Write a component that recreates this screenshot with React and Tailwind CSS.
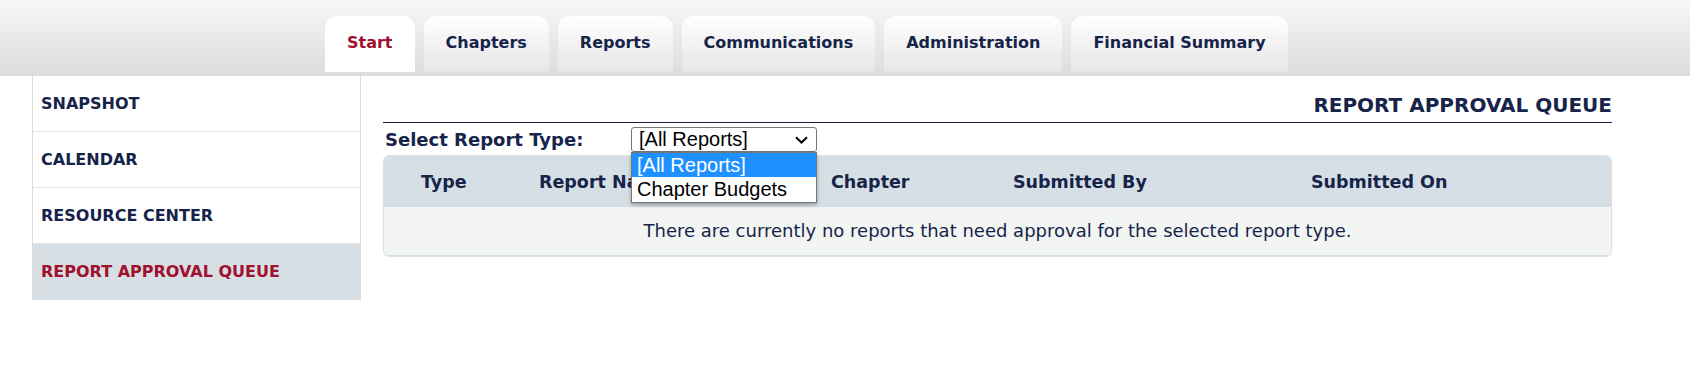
import React from "react";

const NAVY = "text-[#16244a]";

function Tab({ label, active }) {
  return (
    <div
      className={
        "h-[56px] px-[22px] pt-[17px] rounded-t-[12px] text-[16px] leading-[20px] font-bold " +
        (active
          ? "bg-white text-[#a0112f]"
          : "bg-gradient-to-b from-white to-[#e6e6e6] " + NAVY)
      }
    >
      {label}
    </div>
  );
}

function SideItem({ label, active, last }) {
  return (
    <div
      className={
        "h-[56px] flex items-center pl-[8px] text-[16px] leading-[20px] font-bold " +
        (last ? "" : "border-b border-dotted border-[#cfcfcf] ") +
        (active ? "bg-[#d7dfe4] text-[#a0112f]" : "bg-white " + NAVY)
      }
    >
      {label}
    </div>
  );
}

export default function App() {
  return (
    <div
      className="w-[1690px] h-[384px] bg-white overflow-hidden"
      style={{ fontFamily: '"DejaVu Sans", Verdana, sans-serif' }}
    >
      {/* Header */}
      <div className="h-[76px] bg-gradient-to-b from-[#f7f7f7] to-[#dcdcdc] pt-[16px] pl-[325px] flex gap-[9px] items-start">
        <Tab label="Start" active />
        <Tab label="Chapters" />
        <Tab label="Reports" />
        <Tab label="Communications" />
        <Tab label="Administration" />
        <Tab label="Financial Summary" />
      </div>

      <div className="flex">
        {/* Sidebar */}
        <div className="ml-[32px] w-[329px] border-x border-[#dcdcdc]">
          <SideItem label="SNAPSHOT" />
          <SideItem label="CALENDAR" />
          <SideItem label="RESOURCE CENTER" />
          <SideItem label="REPORT APPROVAL QUEUE" active last />
        </div>

        {/* Main */}
        <div className="ml-[22px] w-[1229px] pt-[17px]">
          <div
            className={
              "text-right text-[20px] leading-[24px] font-bold pb-[5px] border-b border-[#16244a] " +
              NAVY
            }
          >
            REPORT APPROVAL QUEUE
          </div>

          <div className="mt-[4px] flex items-center h-[25px]">
            <div className={"w-[248px] pl-[2px] text-[18px] leading-[22px] font-bold " + NAVY}>
              Select Report Type:
            </div>
            <div className="relative">
              <div
                className="w-[186px] h-[25px] border border-[#767676] rounded-[3px] bg-white flex items-center justify-between pl-[7px] pr-[8px] text-black text-[20px] leading-[23px]"
                style={{ fontFamily: '"Liberation Sans", Arial, sans-serif' }}
              >
                <span>[All Reports]</span>
                <svg width="13" height="8" viewBox="0 0 13 8" fill="none">
                  <path d="M1 1.2 L6.5 6.5 L12 1.2" stroke="#000" strokeWidth="2" />
                </svg>
              </div>
              <div
                className="absolute left-0 top-[25px] w-[186px] bg-white border border-[#767676] shadow-[0_2px_4px_rgba(0,0,0,0.3)] z-10 text-[20px] leading-[24px]"
                style={{ fontFamily: '"Liberation Sans", Arial, sans-serif' }}
              >
                <div className="h-[24px] bg-[#1e90ff] text-white pl-[5px]">[All Reports]</div>
                <div className="h-[25px] text-black pl-[5px]">Chapter Budgets</div>
              </div>
            </div>
          </div>

          <div className="mt-[3px] rounded-[6px] border border-[#d9e0e5] overflow-hidden shadow-[0_1px_1px_rgba(0,0,0,0.12)]">
            <div
              className={
                "h-[51px] bg-[#d6dfe5] flex items-center pl-[37px] text-[17.5px] leading-[22px] font-bold " +
                NAVY
              }
            >
              <div className="w-[118px]">Type</div>
              <div className="w-[292px]">Report Name</div>
              <div className="w-[182px]">Chapter</div>
              <div className="w-[298px]">Submitted By</div>
              <div>Submitted On</div>
            </div>
            <div
              className={
                "h-[48px] bg-[#f3f5f3] flex items-center justify-center text-[18px] leading-[22px] " +
                NAVY
              }
            >
              There are currently no reports that need approval for the selected report type.
            </div>
          </div>
        </div>
      </div>
    </div>
  );
}
